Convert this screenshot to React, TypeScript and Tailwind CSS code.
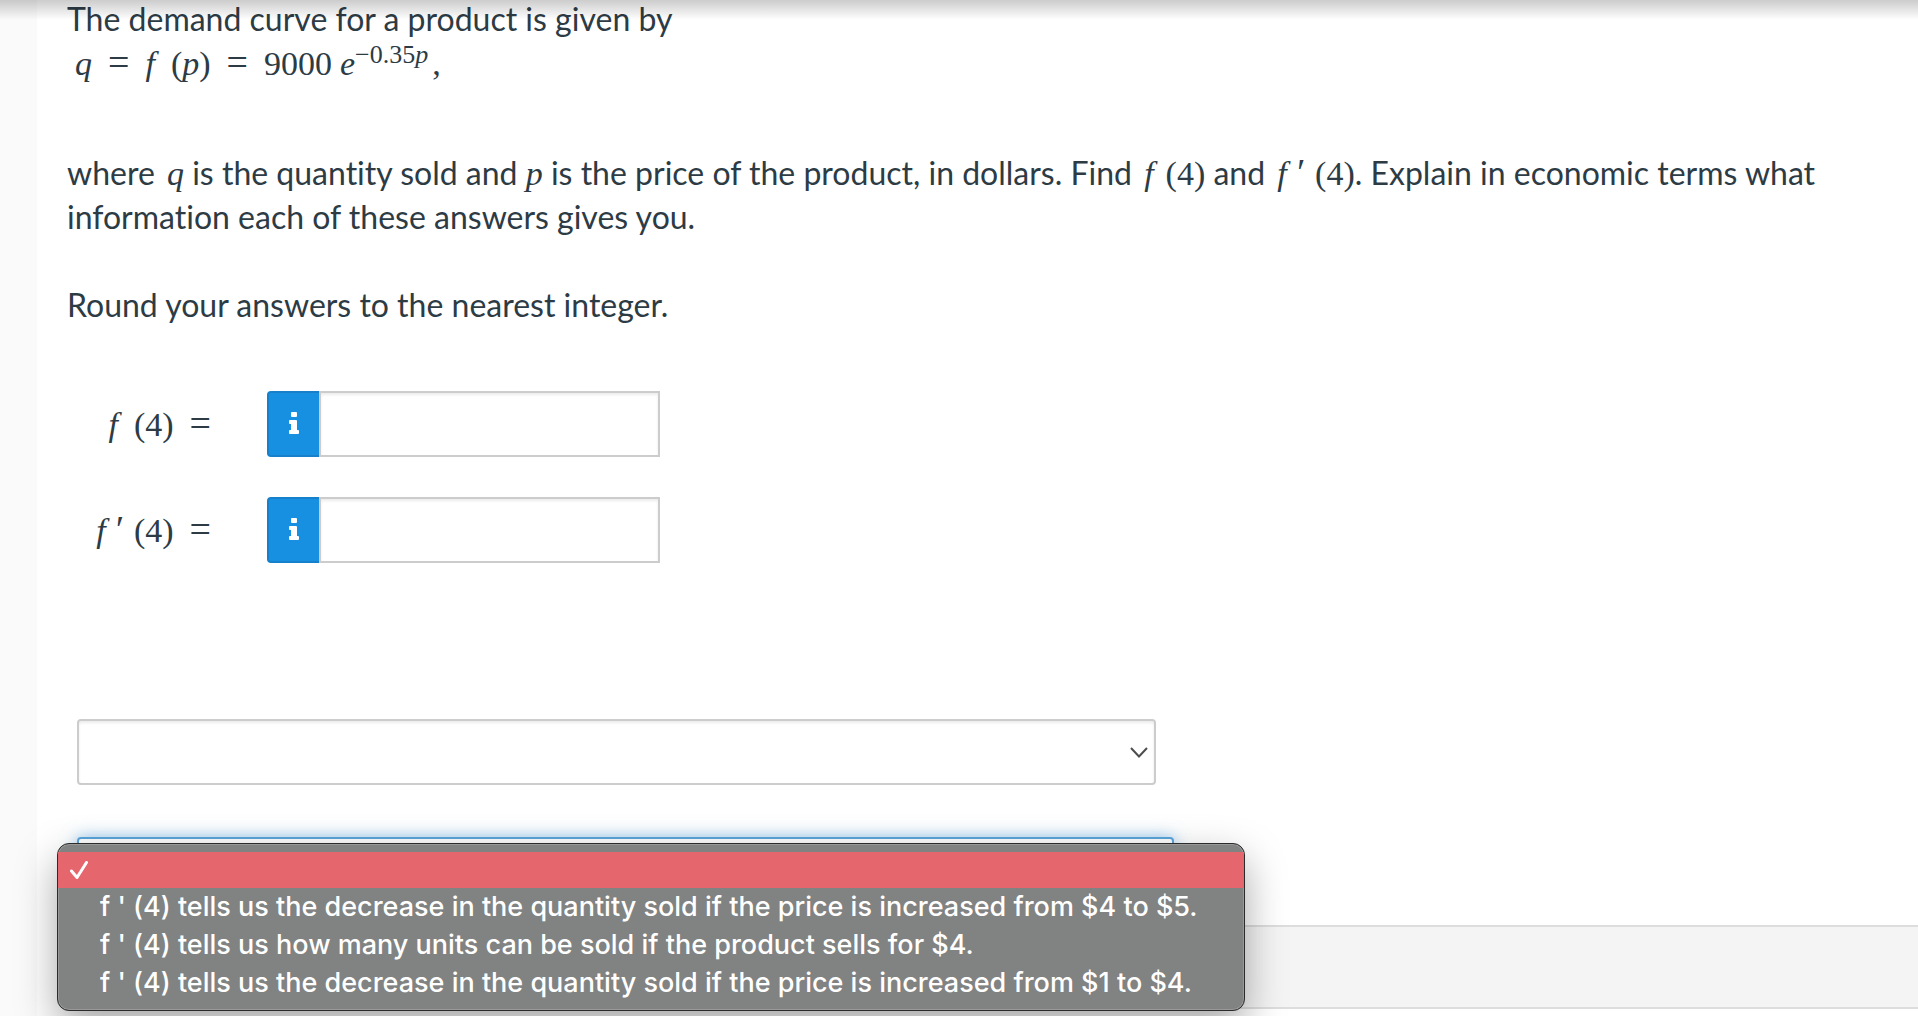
import { useState } from 'react';
import type { ReactNode } from 'react';

const OPTIONS = [
    '',
    "f ' (4) tells us the decrease in the quantity sold if the price is increased from $4 to $5.",
    "f ' (4) tells us how many units can be sold if the product sells for $4.",
    "f ' (4) tells us the decrease in the quantity sold if the price is increased from $1 to $4.",
];

const FIRST_OPTIONS = [
    '',
    'f (4) tells us how many units can be sold if the product sells for $4.',
    'f (4) tells us the price at which 4 units can be sold.',
];

function MathText({ children }: { children: ReactNode }) {
    return <span className="whitespace-nowrap font-['Liberation_Serif',serif] text-[34px] leading-none">{children}</span>;
}

function Equals() {
    return <span className="mx-4 text-[38px] leading-none">=</span>;
}

function Prime() {
    return <span className="ml-2 mr-3 text-[38px] italic leading-none">′</span>;
}

function AnswerRow({ id, name, label }: { id: string; name: string; label: ReactNode }) {
    const [value, setValue] = useState('');

    return (
        <div className="flex items-center">
            <label htmlFor={id} className="w-[160px] shrink-0 text-right">
                {label}
            </label>
            <div className="ml-10 flex h-[66px]">
                <button
                    type="button"
                    aria-label={`Information about ${name}`}
                    className="flex w-[52px] items-center justify-center rounded-l border-2 border-r-0 border-[#1681ca] bg-[#1890e2] pb-0.5 text-white"
                >
                    <svg width="10" height="22" viewBox="0 0 10 22" fill="currentColor" aria-hidden="true">
                        <rect x="2" y="0" width="6" height="5" rx="1" />
                        <path d="M1 8h6a1 1 0 0 1 1 1v9h1a1 1 0 0 1 1 1v2a1 1 0 0 1-1 1H1a1 1 0 0 1-1-1v-2a1 1 0 0 1 1-1h1v-6H1a1 1 0 0 1-1-1V9a1 1 0 0 1 1-1z" />
                    </svg>
                </button>
                <input
                    id={id}
                    type="text"
                    value={value}
                    onChange={e => setValue(e.target.value)}
                    className="w-[341px] border-2 border-[#cccccc] bg-white px-4 text-[28px] shadow-[inset_0_2px_3px_rgba(0,0,0,0.08)] outline-none"
                />
            </div>
        </div>
    );
}

export default function App() {
    const [first, setFirst] = useState('');
    const [selected, setSelected] = useState(0);

    return (
        <div className="relative flex min-h-screen overflow-hidden bg-white font-['Lato',sans-serif] text-[32px] leading-[44px] text-[#2d3b45] [font-variant-ligatures:none]">
            {/* Shadow cast by the toolbar above */}
            <div className="pointer-events-none absolute inset-x-0 top-0 h-5 bg-linear-to-b from-black/20 to-transparent" />

            <aside className="w-[37px] shrink-0 bg-[#fafafa]" />

            <main className="min-w-0 flex-1 pb-[7px]">
                <div className="pl-[30px] pr-12">
                    <p className="-mt-[3px]">The demand curve for a product is given by</p>
                    <p className="h-11 pl-2">
                        <MathText>
                            <i>q</i>
                            <Equals />
                            <i className="mr-4">f</i>(<i>p</i>)
                            <Equals />
                            9000
                            <i className="ml-2">e</i>
                            <sup className="-top-3 align-baseline text-[26px] leading-none">
                                −0.35<i>p</i>
                            </sup>
                            <span className="ml-1">,</span>
                        </MathText>
                    </p>

                    <p className="mt-[66px]">
                        where{' '}
                        <MathText>
                            <i className="ml-1">q</i>
                        </MathText>{' '}
                        is the quantity sold and{' '}
                        <MathText>
                            <i>p</i>
                        </MathText>{' '}
                        is the price of the product, in dollars. Find{' '}
                        <MathText>
                            <i className="ml-1 mr-3">f</i>(4)
                        </MathText>{' '}
                        and{' '}
                        <MathText>
                            <i className="ml-1">f</i>
                            <Prime />
                            (4)
                        </MathText>
                        . Explain in economic terms what information each of these answers gives you.
                    </p>

                    <p className="mt-11">Round your answers to the nearest integer.</p>

                    {/* Numeric answers */}
                    <div className="mt-16 flex flex-col gap-10">
                        <AnswerRow
                            id="answer-f"
                            name="f (4)"
                            label={
                                <MathText>
                                    <i className="mr-4">f</i>(4)
                                    <Equals />
                                </MathText>
                            }
                        />
                        <AnswerRow
                            id="answer-f-prime"
                            name="f ′ (4)"
                            label={
                                <MathText>
                                    <i>f</i>
                                    <Prime />
                                    (4)
                                    <Equals />
                                </MathText>
                            }
                        />
                    </div>

                    {/* Interpretation drop-downs */}
                    <div className="mt-[156px] flex flex-col gap-[52px] pl-[10px]">
                        <div className="relative h-[66px] w-[1079px]">
                            <select
                                aria-label="Meaning of f (4)"
                                value={first}
                                onChange={e => setFirst(e.target.value)}
                                className="h-full w-full appearance-none rounded border-2 border-[#cccccc] bg-white px-3 text-[28px] shadow-[inset_0_2px_3px_rgba(0,0,0,0.08)] outline-none"
                            >
                                {FIRST_OPTIONS.map(text => (
                                    <option key={text} value={text}>{text}</option>
                                ))}
                            </select>
                            <svg className="pointer-events-none absolute right-2 top-7 h-[11px] w-[18px]" viewBox="0 0 18 11" fill="none" stroke="#4d4d4d" strokeWidth="2" aria-hidden="true">
                                <path d="M1 1l8 8.5L17 1" />
                            </svg>
                        </div>

                        <div className="relative h-[66px] w-[1097px]">
                            <select
                                aria-label="Meaning of f ′ (4)"
                                value={selected}
                                onChange={e => setSelected(Number(e.target.value))}
                                className="h-full w-full appearance-none rounded border-2 border-[#5ba6dc] bg-white text-[28px] shadow-[0_0_16px_rgba(82,168,236,0.6)] outline-none"
                            >
                                {OPTIONS.map((text, i) => (
                                    <option key={i} value={i}>{text}</option>
                                ))}
                            </select>

                            {/* Open menu */}
                            <ul
                                role="listbox"
                                aria-label="Meaning of f ′ (4)"
                                className="absolute -left-5 top-1.5 z-10 w-[1188px] rounded-xl border border-[#2b2b2b] bg-[#818282] py-2 font-['Inter',sans-serif] text-[27px] font-medium leading-[38px] text-white shadow-[inset_0_0_0_1px_#999,0_16px_40px_rgba(0,0,0,0.35)]"
                            >
                                {OPTIONS.map((text, i) => (
                                    <li
                                        key={i}
                                        role="option"
                                        aria-selected={i === selected}
                                        onClick={() => setSelected(i)}
                                        className={`flex items-center whitespace-nowrap pl-3 ${i === selected ? 'h-9 bg-[#e5676d]' : 'h-[38px]'}`}
                                    >
                                        <span className="w-[30px] shrink-0">
                                            {i === selected && (
                                                <svg width="18" height="18" viewBox="0 0 18 18" fill="none" stroke="currentColor" strokeWidth="3" strokeLinecap="round" strokeLinejoin="round" aria-hidden="true">
                                                    <path d="M1.5 10l5.5 6.5L16.5 1.5" />
                                                </svg>
                                            )}
                                        </span>
                                        {text}
                                    </li>
                                ))}
                            </ul>
                        </div>
                    </div>
                </div>

                <footer className="ml-[30px] mt-[22px] h-[84px] border-y-2 border-[#dddddd] bg-[#f4f4f4]" />
            </main>
        </div>
    );
}
